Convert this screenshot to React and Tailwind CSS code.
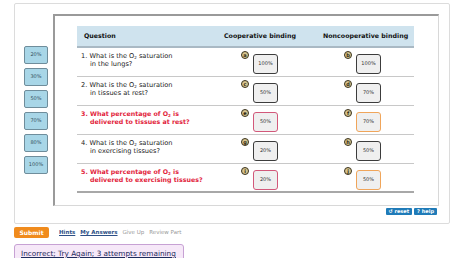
import React from 'react';

const options = ['20%', '30%', '50%', '70%', '80%', '100%'];

const rows = [
    { q1: '1. What is the O', sub: '2', q1b: ' saturation', q2: 'in the lungs?', red: false, a: ['a', '100%'], b: ['b', '100%'] },
    { q1: '2. What is the O', sub: '2', q1b: ' saturation', q2: 'in tissues at rest?', red: false, a: ['c', '50%'], b: ['d', '70%'] },
    { q1: '3. What percentage of O', sub: '2', q1b: ' is', q2: 'delivered to tissues at rest?', red: true, a: ['e', '50%'], b: ['f', '70%'] },
    { q1: '4. What is the O', sub: '2', q1b: ' saturation', q2: 'in exercising tissues?', red: false, a: ['g', '20%'], b: ['h', '50%'] },
    { q1: '5. What percentage of O', sub: '2', q1b: ' is', q2: 'delivered to exercising tissues?', red: true, a: ['i', '20%'], b: ['j', '50%'] },
];

const Badge = ({ letter }) => (
    <div className='w-[8px] h-[8px] rounded-full bg-[#d6c48e] border border-[#3a3320] flex items-center justify-center text-[5px] font-bold leading-none text-[#2a2410]'>
        {letter}
    </div>
);

const AnswerBox = ({ value, tone }) => {
    const border = tone === 'pink' ? 'border-[#d2587a]' : tone === 'orange' ? 'border-[#f0a55a]' : 'border-[#3c3c3c]';
    return (
        <div className={`w-[25px] h-[20px] rounded-[3px] border-[1.5px] ${border} bg-[#efefef] flex items-center justify-center text-[5px] text-[#333]`}>
            {value}
        </div>
    );
};

export default function App() {
    return (
        <div className='w-[474px] h-[258px] bg-white overflow-hidden' style={{ fontFamily: '"DejaVu Sans", Verdana, sans-serif' }}>
            {/* main panel */}
            <div className='ml-[14px] mt-[3px] w-[436px] h-[221px] border border-[#dcdcdc] rounded-[2px] flex flex-col'>
                <div className='flex'>
                    {/* draggable options */}
                    <div className='w-[38px] pl-[9px] pt-[42px] flex flex-col gap-[4px]'>
                        {options.map((o) => (
                            <div key={o} className='w-[24px] h-[18px] bg-[#a8d6e7] border border-[#6f8d9b] rounded-[2px] flex items-center justify-center text-[5px] text-[#33505c]'>
                                {o}
                            </div>
                        ))}
                    </div>

                    {/* table box */}
                    <div className='mt-[10px] w-[386px] h-[192px] border-l-2 border-t-2 border-[#9a9a9a] border-r border-b border-r-[#d8d8d8] border-b-[#d8d8d8] pl-[22px] pt-[10px]'>
                        <div className='w-[337px]'>
                            <div className='h-[22px] bg-[#cfe3ee] border-b-2 border-[#a9b9c4] flex items-center text-[6.3px] font-bold text-[#111]'>
                                <div className='w-[142px] pl-[7px]'>Question</div>
                                <div className='w-[95px] pl-[5px]'>Cooperative binding</div>
                                <div className='w-[100px] pl-[9px]'>Noncooperative binding</div>
                            </div>
                            {rows.map((r, i) => (
                                <div key={i} className={`h-[29px] flex ${i < 4 ? 'border-b border-[#c8c8c8]' : 'border-b-2 border-[#a8a8a8]'}`}>
                                    <div className={`w-[142px] pl-[4px] pt-[4px] leading-[8px] whitespace-nowrap ${r.red ? 'text-[6.3px] font-bold text-[#e21e3c]' : 'text-[6.6px] text-[#222]'}`}>
                                        <div>{r.q1}<sub className='text-[4px]'>{r.sub}</sub>{r.q1b}</div>
                                        <div className='pl-[9px]'>{r.q2}</div>
                                    </div>
                                    <div className='w-[95px] pl-[22px] pt-[3px] flex items-start'>
                                        <Badge letter={r.a[0]} />
                                        <div className='ml-[4px] mt-[3px]'>
                                            <AnswerBox value={r.a[1]} tone={r.red ? 'pink' : 'dark'} />
                                        </div>
                                    </div>
                                    <div className='w-[100px] pl-[30px] pt-[3px] flex items-start'>
                                        <Badge letter={r.b[0]} />
                                        <div className='ml-[4px] mt-[3px]'>
                                            <AnswerBox value={r.b[1]} tone={r.red ? 'orange' : 'dark'} />
                                        </div>
                                    </div>
                                </div>
                            ))}
                        </div>
                    </div>
                </div>

                <div className='flex justify-end gap-[2px] pr-[12px] mt-[2px]'>
                    <div className='h-[7px] px-[3px] bg-[#1f7bb8] rounded-[1px] text-white text-[5px] font-bold leading-[7px]'>↺ reset</div>
                    <div className='h-[7px] px-[3px] bg-[#1f7bb8] rounded-[1px] text-white text-[5px] font-bold leading-[7px]'>? help</div>
                </div>
            </div>

            {/* actions */}
            <div className='ml-[14px] mt-[3px] flex items-center gap-[5px] text-[5.5px]'>
                <div className='w-[35px] h-[11px] bg-[#f08b1d] rounded-[2px] flex items-center justify-center text-white font-bold text-[6px]'>Submit</div>
                <span className='ml-[5px] underline font-bold text-[#2b4f86]'>Hints</span>
                <span className='underline font-bold text-[#2b4f86]'>My Answers</span>
                <span className='text-[#9a9a9a]'>Give Up</span>
                <span className='text-[#9a9a9a]'>Review Part</span>
            </div>

            <div className='ml-[14px] mt-[6px] w-[170px] h-[30px] bg-[#f6e8f8] border border-[#c7a1d4] rounded-[3px] pl-[6px] pt-[4px]'>
                <div className='text-[7.3px] leading-[10px] whitespace-nowrap text-[#1e2b5c] underline'>Incorrect; Try Again; 3 attempts remaining</div>
            </div>
        </div>
    );
}
